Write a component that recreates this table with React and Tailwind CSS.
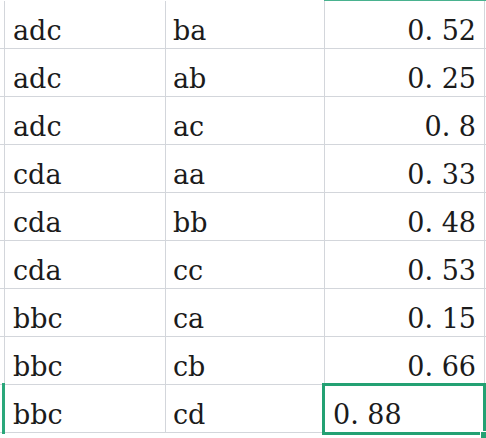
import React from "react";

const rows = [
  ["adc", "ba", "0. 52"],
  ["adc", "ab", "0. 25"],
  ["adc", "ac", "0. 8"],
  ["cda", "aa", "0. 33"],
  ["cda", "bb", "0. 48"],
  ["cda", "cc", "0. 53"],
  ["bbc", "ca", "0. 15"],
  ["bbc", "cb", "0. 66"],
  ["bbc", "cd", "0. 88"],
];

export default function App() {
  return (
    <div
      className="relative w-[486px] h-[438px] overflow-hidden bg-white text-[#1b1b1b] text-[27px] leading-[32px]"
      style={{ fontFamily: '"DejaVu Serif", serif' }}
    >
      <div className="flex h-px">
        <div className="w-[324px]" />
        <div className="flex-1 bg-[#49b28f]" />
      </div>
      {rows.map((r, i) => {
        const last = i === rows.length - 1;
        return (
          <div key={i} className="flex h-[48px] border-b border-[#d3d6db]">
            <div className="w-[4px]" />
            <div className="w-[161px] border-l border-[#d3d6db] pl-[8px] pb-[1px] flex items-end">
              {r[0]}
            </div>
            <div className="w-[159px] border-l border-[#d3d6db] pl-[7px] pb-[1px] flex items-end">
              {r[1]}
            </div>
            <div
              className={
                last
                  ? "w-[161px] border-l border-r border-[#d3d6db] pl-[8px] pb-[1px] flex items-end justify-start"
                  : "w-[161px] border-l border-r border-[#d3d6db] pr-[8px] pb-[1px] flex items-end justify-end"
              }
            >
              {r[2]}
            </div>
          </div>
        );
      })}
      <div className="absolute left-[2px] top-[383px] w-[3px] h-[51px] bg-[#2aa77a]" />
      <div className="absolute left-[322px] top-[383px] w-[164px] h-[52px] border-[3px] border-[#23a173]" />
      <div className="absolute left-[480px] top-[431px] w-[8px] h-[8px] bg-[#23a173] border border-white" />
    </div>
  );
}
